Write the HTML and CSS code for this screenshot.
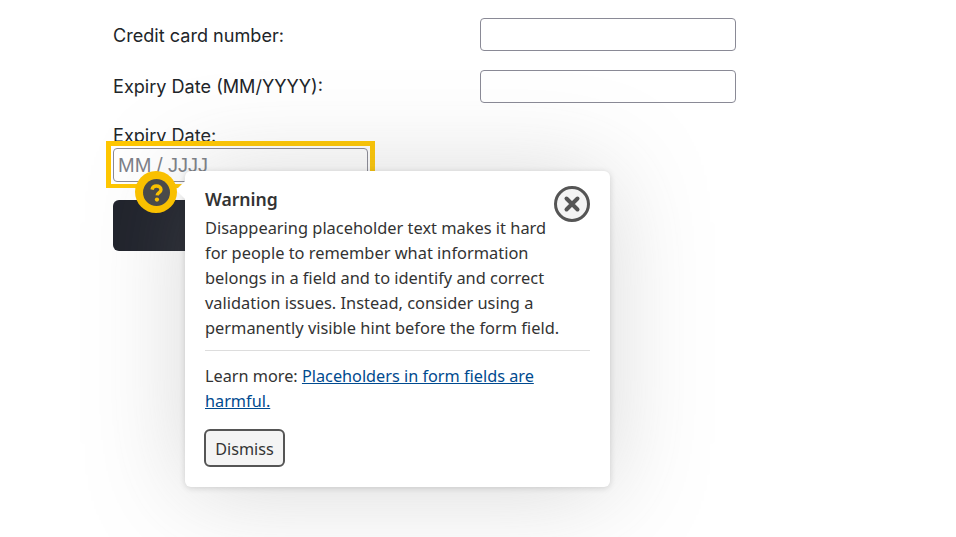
FILE: index.html
```html
<!DOCTYPE html>
<html lang="en">
<head>
  <meta charset="UTF-8">
  <title>Payment form</title>
  <link rel="stylesheet" href="styles.css">
</head>
<body>

<!-- Form -->
<form class="pay-form">
  <div class="row">
    <label for="cardNumber">Credit card number:</label>
    <input type="text" id="cardNumber" class="text-input">
  </div>
  <div class="row">
    <label for="expiryOne">Expiry Date (MM/YYYY):</label>
    <input type="text" id="expiryOne" class="text-input">
  </div>
  <div class="stacked">
    <label for="expiryTwo">Expiry Date:</label>
    <div class="flag-box">
      <input type="text" id="expiryTwo" class="text-input flagged" placeholder="MM / JJJJ">
    </div>
  </div>
  <button type="button" class="submit-btn" aria-label="Submit"></button>
</form>

<!-- Warning badge -->
<div class="badge">
  <svg width="27" height="27" viewBox="0 0 24 24">
    <circle cx="12" cy="12" r="12" fill="#4a4a4a"/>
    <path d="M8 9.400a4 4 0 0 1 4-3.200c2.400 0 4 1.400 4 3.300 0 2.600-3.300 2.600-3.400 5" fill="none" stroke="#f9c000" stroke-width="3"/>
    <circle cx="12.400" cy="18.300" r="1.900" fill="#f9c000"/>
  </svg>
</div>

<!-- Warning popover -->
<div class="popover">
  <span class="arrow"></span>
  <button type="button" class="close-btn" aria-label="Close">
    <svg width="20" height="20" viewBox="0 0 20 20">
      <path d="M4.500 4.500l11 11M15.500 4.500l-11 11" stroke="#555" stroke-width="4" stroke-linecap="round"/>
    </svg>
  </button>
  <h2>Warning</h2>
  <p class="message">Disappearing placeholder text makes it hard for people to remember what information belongs in a field and to identify and correct validation issues. Instead, consider using a permanently visible hint before the form field.</p>
  <hr>
  <p class="learn">Learn more: <a href="#">Placeholders in form fields are harmful.</a></p>
  <button type="button" class="dismiss-btn">Dismiss</button>
</div>

</body>
</html>
```

FILE: styles.css
```css
* { margin: 0; padding: 0; box-sizing: border-box; }
html, body { height: 100%; overflow: hidden; }
body { font-family: Inter, 'Noto Sans', sans-serif; background: white; color: #212529; position: relative; }

/* Form */
.pay-form { width: 623px; margin-left: 113px; padding-top: 18px; }
.row {
  display: flex;
  justify-content: space-between;
  align-items: center;
  margin-bottom: 19px;
}
label { font-size: 18.1px; line-height: 27px; }
.row:first-child label { padding-top: 1px; }
.text-input {
  width: 256px;
  height: 33px;
  border: 1px solid #8a8a96;
  border-radius: 4px;
  background: white;
}
.stacked { display: flex; flex-direction: column; align-items: flex-start; margin-top: 17px; }
.stacked label { height: 19px; }
/* yellow frame sits on top of the label's descenders */
.flag-box {
  position: relative;
  margin-left: -7px;
  padding: 2px;
  background: white;
  border: 5px solid #ffc700;
  border-bottom-width: 4px;
  line-height: 0;
}
.flagged {
  display: block;
  width: 255px;
  height: 34px;
  padding: 0 4px;
  font-family: 'Liberation Sans', sans-serif;
  font-size: 20px;
}
.flagged::placeholder { color: #7d8087; }
.submit-btn {
  display: block;
  width: 130px;
  height: 51px;
  margin-top: 12px;
  background: #20232c;
  border: none;
  border-radius: 6px;
}

/* Badge over the flagged input */
.badge {
  position: absolute;
  left: 135px;
  top: 171px;
  width: 42px;
  height: 42px;
  border-radius: 50%;
  background: #f9c000;
  display: flex;
  align-items: center;
  justify-content: center;
  z-index: 3;
}

/* Popover */
.popover {
  position: absolute;
  left: 185px;
  top: 171px;
  width: 425px;
  height: 316px;
  padding: 16px 20px 20px;
  background: white;
  border-radius: 6px;
  box-shadow: 0 4px 100px rgba(125,125,125,0.3), 0 1px 6px rgba(0,0,0,0.16);
  font-family: 'Noto Sans', sans-serif;
  font-size: 16.4px;
  line-height: 25px;
  color: #333;
  z-index: 2;
}
.arrow {
  position: absolute;
  left: -9px;
  top: 10px;
  width: 0;
  height: 0;
  border-top: 9px solid transparent;
  border-bottom: 9px solid transparent;
  border-right: 9px solid white;
}
.popover h2 { font-size: 17.6px; font-weight: 600; line-height: 24px; margin-bottom: 4px; }
.popover .message { width: 362px; }
.popover hr { border: none; border-top: 1px solid #ddd; margin: 10px 0 13px; }
.popover .learn { width: 375px; font-size: 16.25px; }
.popover a { color: #004a8f; }
.close-btn {
  position: absolute;
  right: 20px;
  top: 15px;
  width: 36px;
  height: 36px;
  border: 3px solid #555;
  border-radius: 50%;
  background: #f4f4f4;
  display: flex;
  align-items: center;
  justify-content: center;
}
.dismiss-btn {
  display: block;
  width: 81px;
  height: 38px;
  margin-top: 15px;
  margin-left: -1px;
  padding-top: 2px;
  border: 2px solid #555;
  border-radius: 6px;
  background: #f4f4f4;
  font-family: 'Noto Sans', sans-serif;
  font-size: 16.2px;
  color: #333;
}
```
